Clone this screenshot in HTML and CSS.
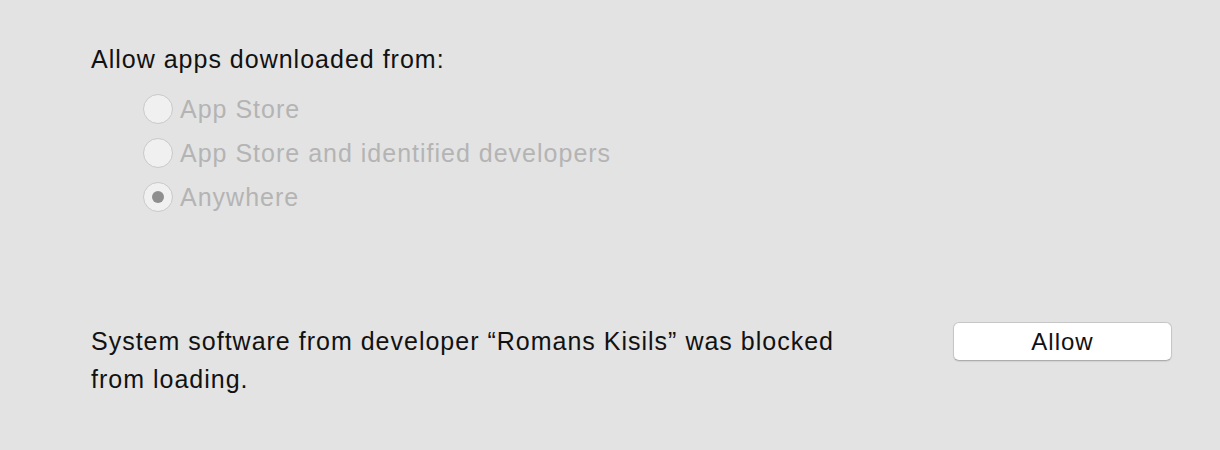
FILE: index.html
```html
<!DOCTYPE html>
<html lang="en">
<head>
    <meta charset="UTF-8">
    <title>Security &amp; Privacy</title>
    <link rel="stylesheet" href="styles.css">
</head>
<body>
    <div class="pane">
        <div class="section">
            <div class="heading">Allow apps downloaded from:</div>
            <div class="options">
                <div class="option"><span class="radio"></span><span>App Store</span></div>
                <div class="option"><span class="radio"></span><span>App Store and identified developers</span></div>
                <div class="option"><span class="radio checked"></span><span>Anywhere</span></div>
            </div>
        </div>
        <div class="blocked">
            <div class="message">System software from developer “Romans Kisils” was blocked from loading.</div>
            <button type="button" class="btn">Allow</button>
        </div>
    </div>
</body>
</html>
```

FILE: styles.css
```css
body {
    margin: 0;
    background-color: #e3e3e3;
    font-family: "Liberation Sans", Arial, sans-serif;
    color: #111;
}
.pane {
    width: 1220px;
    height: 450px;
    padding: 43px 48px 0 91px;
    box-sizing: border-box;
}
.heading {
    font-size: 25px;
    line-height: 32px;
    letter-spacing: 1px;
}
.options {
    margin-top: 12px;
    padding-left: 52px;
}
.option {
    display: flex;
    align-items: center;
    gap: 7px;
    height: 44px;
    font-size: 25px;
    letter-spacing: 1px;
    color: #b4b4b4;
}
.radio {
    width: 28px;
    height: 28px;
    border-radius: 50%;
    border: 1px solid #c9c9c9;
    background-color: #f0f0f0;
    display: flex;
    align-items: center;
    justify-content: center;
    flex-shrink: 0;
}
.radio.checked::after {
    content: "";
    width: 12px;
    height: 12px;
    border-radius: 50%;
    background-color: #8e8e8e;
}
.blocked {
    display: flex;
    justify-content: space-between;
    align-items: flex-start;
    margin-top: 103px;
}
.message {
    width: 760px;
    font-size: 25px;
    line-height: 38px;
    letter-spacing: 1px;
}
.btn {
    width: 219px;
    height: 39px;
    margin-top: 0;
    background-color: #fff;
    border: 1px solid #c6c6c6;
    border-bottom-color: #adadad;
    border-radius: 6px;
    box-shadow: 0 1px 1px rgba(0, 0, 0, 0.08);
    font-family: "Liberation Sans", Arial, sans-serif;
    font-size: 24px;
    letter-spacing: 1px;
    color: #111;
    padding: 0;
}
```
